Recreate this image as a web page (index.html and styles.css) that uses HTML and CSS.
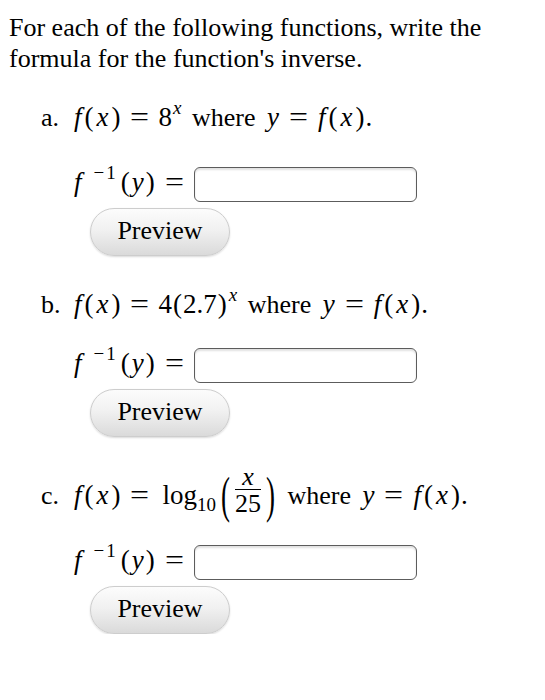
FILE: index.html
```html
<!DOCTYPE html>
<html>
<head>
<meta charset="utf-8">
<link rel="stylesheet" href="styles.css">
</head>
<body>
<div class="page">
  <p class="intro">For each of the following functions, write the formula for the function's inverse.</p>

  <div class="item item-a">
    <div class="line">
      <span class="label">a.</span><span class="math"><i class="f">f</i><span class="p">(</span><i class="x">x</i><span class="p">)</span><span class="rel"><span class="eq">=</span></span>8<sup class="sup"><i>x</i></sup></span>
      <span class="txt">where</span>
      <span class="math"><i class="y">y</i><span class="rel"><span class="eq">=</span></span><i class="f">f</i><span class="p">(</span><i class="x">x</i><span class="p">)</span>.</span>
    </div>
    <div class="answer">
      <span class="math lhs"><i class="f">f</i><sup class="sup inv">−1</sup><span class="p">(</span><i class="y">y</i><span class="p">)</span><span class="rel"><span class="eq">=</span></span></span>
      <input class="field" type="text">
    </div>
    <button class="preview" type="button">Preview</button>
  </div>

  <div class="item item-b">
    <div class="line">
      <span class="label">b.</span><span class="math"><i class="f">f</i><span class="p">(</span><i class="x">x</i><span class="p">)</span><span class="rel"><span class="eq">=</span></span>4<span class="p">(</span>2.7<span class="p">)</span><sup class="sup"><i>x</i></sup></span>
      <span class="txt">where</span>
      <span class="math"><i class="y">y</i><span class="rel"><span class="eq">=</span></span><i class="f">f</i><span class="p">(</span><i class="x">x</i><span class="p">)</span>.</span>
    </div>
    <div class="answer">
      <span class="math lhs"><i class="f">f</i><sup class="sup inv">−1</sup><span class="p">(</span><i class="y">y</i><span class="p">)</span><span class="rel"><span class="eq">=</span></span></span>
      <input class="field" type="text">
    </div>
    <button class="preview" type="button">Preview</button>
  </div>

  <div class="item item-c">
    <div class="line">
      <span class="label">c.</span><span class="math"><i class="f">f</i><span class="p">(</span><i class="x">x</i><span class="p">)</span><span class="rel"><span class="eq">=</span></span><span class="log">log</span><sub class="sub">10</sub><span class="big">(</span><span class="frac"><span class="num"><i>x</i></span><span class="den">25</span></span><span class="big">)</span></span>
      <span class="txt">where</span>
      <span class="math"><i class="y">y</i><span class="rel"><span class="eq">=</span></span><i class="f">f</i><span class="p">(</span><i class="x">x</i><span class="p">)</span>.</span>
    </div>
    <div class="answer">
      <span class="math lhs"><i class="f">f</i><sup class="sup inv">−1</sup><span class="p">(</span><i class="y">y</i><span class="p">)</span><span class="rel"><span class="eq">=</span></span></span>
      <input class="field" type="text">
    </div>
    <button class="preview" type="button">Preview</button>
  </div>
</div>
</body>
</html>
```

FILE: styles.css
```css
html, body {
  margin: 0;
  padding: 0;
  background: #ffffff;
}

.page {
  padding: 0 9px;
  font-family: "Liberation Serif", "Times New Roman", serif;
  font-size: 26px;
  color: #000;
}

.intro {
  margin: 12px 0 0 0;
  line-height: 31px;
  width: 520px;
}

.item {
  padding-left: 32px;
}

.item-a { margin-top: 27px; }
.item-b { margin-top: 32px; }
.item-c { margin-top: 29px; }

.line {
  line-height: 32px;
  white-space: nowrap;
}

.label {
  display: inline-block;
  width: 32px;
}

.math {
  font-size: 27px;
  font-family: "Liberation Serif", "Times New Roman", serif;
}

.math i {
  font-style: italic;
}

.f { margin: 0 2px 0 1px; }
.x { margin: 0 2px; }
.y { margin: 0 1px; }

.p {
  margin: 0 1px;
}

.rel {
  display: inline-block;
  width: 21px;
  margin: 0 8px;
  text-align: center;
}

.eq {
  display: inline-block;
  transform: scaleX(1.25);
}

.sup {
  font-size: 19px;
  vertical-align: 12px;
  line-height: 0;
  margin-left: 1px;
}

.inv {
  margin-left: 10px;
  margin-right: 2px;
  letter-spacing: 2px;
}

.log {
  margin-left: 4px;
}

.sub {
  font-size: 19px;
  vertical-align: -7px;
  line-height: 0;
  margin-right: 3px;
}

.txt {
  margin: 0 4px;
}

.big {
  display: inline-block;
  transform: scaleY(1.85);
  margin: 0 2px;
}

.frac {
  display: inline-flex;
  flex-direction: column;
  align-items: center;
  vertical-align: 19px;
  line-height: 21px;
  font-size: 26px;
  margin: 0 3px;
}

.num {
  padding: 0 4px 2px;
  border-bottom: 1.5px solid #000;
  align-self: stretch;
  text-align: center;
}

.den {
  padding-top: 3px;
}

.answer {
  display: flex;
  align-items: center;
  margin-top: 33px;
  margin-left: 32px;
}

.item-b .answer { margin-top: 27px; }
.item-c .answer { margin-top: 31px; }

.lhs {
  line-height: 30px;
  margin-bottom: 5px;
  width: 121px;
  flex: none;
  white-space: nowrap;
}

.field {
  box-sizing: border-box;
  width: 223px;
  height: 35px;
  border: 1.5px solid #5c5c5c;
  border-radius: 6px;
  box-shadow: inset 0 2px 2px rgba(0, 0, 0, 0.12);
  background: #fff;
  margin: 0;
  padding: 0 6px;
}

.preview {
  display: block;
  box-sizing: border-box;
  margin: 6px 0 0 49px;
  width: 140px;
  height: 48px;
  border: 1px solid #cdcdcd;
  border-radius: 24px;
  background: linear-gradient(#fcfcfc, #f1f1f1 45%, #dadada);
  box-shadow: 0 1px 2px rgba(0, 0, 0, 0.15);
  font-family: "Liberation Serif", "Times New Roman", serif;
  font-size: 26px;
  color: #000;
  padding: 0 0 2px 0;
}
```
